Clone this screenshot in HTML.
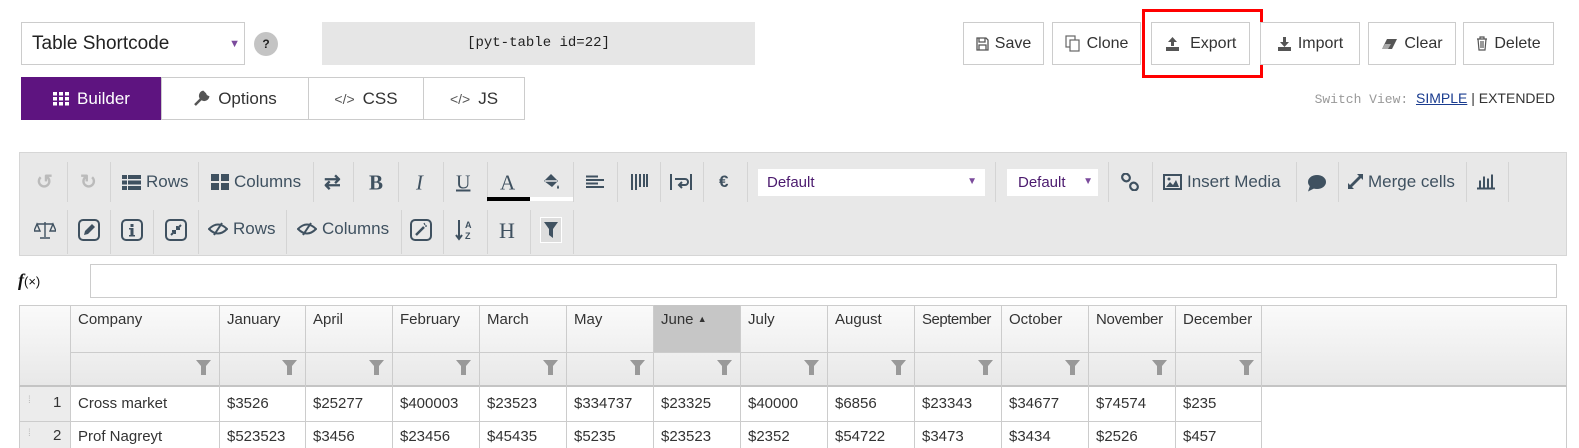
<!DOCTYPE html>
<html><head><meta charset="utf-8"><style>
*{box-sizing:border-box;margin:0;padding:0}
body{width:1579px;height:448px;overflow:hidden;background:#fff;font-family:"Liberation Sans",Arial,sans-serif;position:relative;color:#333}
.a{position:absolute}
.btn{position:absolute;top:22px;height:43px;border:1px solid #ccc;background:#fff;font-size:16px;color:#333;display:flex;align-items:center;justify-content:center;gap:6px}
.tab{position:absolute;top:77px;height:43px;border:1px solid #ccc;font-size:17px;display:flex;align-items:center;justify-content:center;gap:8px;color:#333}
.sep{position:absolute;width:1px;background:#d4d4d4}
.ti{position:absolute;color:#3f5160;font-size:17px;display:flex;align-items:center;gap:5px;transform:translateY(-50%)}
.col{position:absolute;top:305px;height:143px;border-left:1px solid #ccc}
.hd{position:absolute;font-size:15px;color:#333}
.cell{position:absolute;font-size:15px;color:#333}
.hl{position:absolute;height:1px;background:#ccc}
.fi{position:absolute;width:14px;height:14px}
</style></head><body>
<!-- select -->
<div class="a" style="left:21px;top:22px;width:224px;height:43px;border:1px solid #ccc;font-size:19px;color:#222;padding:10px 0 0 10px">Table Shortcode<span style="position:absolute;right:4px;top:15px;font-size:11px;color:#7b4b9c">▼</span></div>
<div class="a" style="left:254px;top:32px;width:24px;height:24px;border-radius:50%;background:#c4c4c4;font-size:12px;font-weight:bold;text-align:center;line-height:24px;color:#222">?</div>
<div class="a" style="left:322px;top:22px;width:433px;height:43px;background:#e6e6e6;font-family:'Liberation Mono',monospace;font-size:14px;text-align:center;line-height:43px;color:#222">[pyt-table id=22]</div>
<!-- buttons -->
<div class="btn" style="left:963px;width:81px"><svg width="13" height="14" viewBox="0 0 13 14"><path d="M1 1h9l2 2v10H1z M3 1v4h6V1 M3 8h7v5H3z" fill="none" stroke="#555" stroke-width="1.3"/></svg>Save</div>
<div class="btn" style="left:1052px;width:89px"><svg width="16" height="17" viewBox="0 0 16 17"><rect x="1" y="1" width="9" height="11" fill="none" stroke="#666" stroke-width="1.2"/><rect x="5" y="5" width="9" height="11" fill="#fff" stroke="#666" stroke-width="1.2"/></svg>Clone</div>
<div class="btn" style="left:1151px;width:99px"><svg width="15" height="14" viewBox="0 0 15 14"><path d="M7.5 0L3 5h3v4h3V5h3z M1 10h13v4H1z" fill="#555"/></svg>&nbsp;Export</div>
<div class="a" style="left:1142px;top:9px;width:121px;height:69px;border:3px solid #f00"></div>
<div class="btn" style="left:1260px;width:100px"><svg width="15" height="14" viewBox="0 0 15 14"><path d="M6 0h3v5h3L7.5 10 3 5h3z M1 10h13v4H1z" fill="#555"/></svg>Import</div>
<div class="btn" style="left:1368px;width:88px"><svg width="17" height="12" viewBox="0 0 17 12"><path d="M6 1h10L11 11H1z" fill="#555"/><path d="M1 11l3-5h6l-3 5z" fill="#fff" opacity=".5"/></svg>Clear</div>
<div class="btn" style="left:1463px;width:91px"><svg width="12" height="15" viewBox="0 0 12 15"><path d="M1 3h10 M4 3V1h4v2 M2 3l1 11h6l1-11 M5 5v7 M7 5v7" fill="none" stroke="#555" stroke-width="1.2"/></svg>Delete</div>
<!-- tabs -->
<div class="tab" style="left:21px;width:141px;background:#5e1480;border-color:#5e1480;color:#fff"><svg width="16" height="14" viewBox="0 0 16 14" fill="#fff"><rect x="0" y="0" width="4" height="3.5"/><rect x="6" y="0" width="4" height="3.5"/><rect x="12" y="0" width="4" height="3.5"/><rect x="0" y="5" width="4" height="3.5"/><rect x="6" y="5" width="4" height="3.5"/><rect x="12" y="5" width="4" height="3.5"/><rect x="0" y="10" width="4" height="3.5"/><rect x="6" y="10" width="4" height="3.5"/><rect x="12" y="10" width="4" height="3.5"/></svg>Builder</div>
<div class="tab" style="left:161px;width:148px"><svg width="17" height="17" viewBox="0 0 17 17"><path d="M2 15L9 8 M10 2a4 4 0 1 0 5 5l-2-1-1-2z" fill="#555" stroke="#555" stroke-width="2.5"/></svg>Options</div>
<div class="tab" style="left:308px;width:116px"><span style="font-size:14px;color:#555">&lt;/&gt;</span>CSS</div>
<div class="tab" style="left:423px;width:102px"><span style="font-size:14px;color:#555">&lt;/&gt;</span>JS</div>
<div class="a" style="right:24px;top:90px;font-size:14px;color:#333"><span style="font-family:'Liberation Mono',monospace;font-size:13px;color:#999">Switch View: </span><span style="color:#1a3c8f;text-decoration:underline">SIMPLE</span> | EXTENDED</div>
<!-- toolbar -->
<div class="a" style="left:19px;top:152px;width:1548px;height:104px;background:#e8e8e8;border:1px solid #d6d6d6"></div>
<div class="sep" style="left:67px;top:162px;height:40px"></div><div class="sep" style="left:110px;top:162px;height:40px"></div><div class="sep" style="left:198px;top:162px;height:40px"></div><div class="sep" style="left:313px;top:162px;height:40px"></div><div class="sep" style="left:353px;top:162px;height:40px"></div><div class="sep" style="left:398px;top:162px;height:40px"></div><div class="sep" style="left:443px;top:162px;height:40px"></div><div class="sep" style="left:487px;top:162px;height:40px"></div><div class="sep" style="left:573px;top:162px;height:40px"></div><div class="sep" style="left:617px;top:162px;height:40px"></div><div class="sep" style="left:660px;top:162px;height:40px"></div><div class="sep" style="left:703px;top:162px;height:40px"></div><div class="sep" style="left:747px;top:162px;height:40px"></div><div class="sep" style="left:995px;top:162px;height:40px"></div><div class="sep" style="left:1108px;top:162px;height:40px"></div><div class="sep" style="left:1152px;top:162px;height:40px"></div><div class="sep" style="left:1296px;top:162px;height:40px"></div><div class="sep" style="left:1338px;top:162px;height:40px"></div><div class="sep" style="left:1466px;top:162px;height:40px"></div><div class="sep" style="left:1508px;top:162px;height:40px"></div>
<div class="sep" style="left:67px;top:210px;height:44px"></div><div class="sep" style="left:110px;top:210px;height:44px"></div><div class="sep" style="left:153px;top:210px;height:44px"></div><div class="sep" style="left:198px;top:210px;height:44px"></div><div class="sep" style="left:286px;top:210px;height:44px"></div><div class="sep" style="left:401px;top:210px;height:44px"></div><div class="sep" style="left:443px;top:210px;height:44px"></div><div class="sep" style="left:487px;top:210px;height:44px"></div><div class="sep" style="left:530px;top:210px;height:44px"></div><div class="sep" style="left:573px;top:210px;height:44px"></div>
<div class="a" style="left:487px;top:197px;width:43px;height:4px;background:#000"></div>
<div class="a" style="left:530px;top:197px;width:43px;height:4px;background:#fff"></div>
<!-- row1 icons -->
<div class="ti" style="left:36px;top:182px;color:#bbb;font-size:20px;font-weight:bold">↺</div>
<div class="ti" style="left:80px;top:182px;color:#bbb;font-size:20px;font-weight:bold">↻</div>
<div class="ti" style="left:122px;top:182px"><svg width="19" height="15" viewBox="0 0 19 15" fill="#3f5160"><rect width="5" height="4"/><rect x="6" width="13" height="4"/><rect y="5.5" width="5" height="4"/><rect x="6" y="5.5" width="13" height="4"/><rect y="11" width="5" height="4"/><rect x="6" y="11" width="13" height="4"/></svg>Rows</div>
<div class="ti" style="left:211px;top:182px"><svg width="18" height="16" viewBox="0 0 18 16" fill="#3f5160"><rect width="8" height="7"/><rect x="10" width="8" height="7"/><rect y="9" width="8" height="7"/><rect x="10" y="9" width="8" height="7"/></svg>Columns</div>
<div class="ti" style="left:324px;top:182px;font-size:20px;font-weight:bold">⇄</div>
<div class="ti" style="left:369px;top:183px;font-family:'Liberation Serif',serif;font-weight:bold;font-size:21px">B</div>
<div class="ti" style="left:416px;top:183px;font-family:'Liberation Serif',serif;font-style:italic;font-size:21px">I</div>
<div class="ti" style="left:456px;top:183px;font-family:'Liberation Serif',serif;text-decoration:underline;font-size:20px">U</div>
<div class="ti" style="left:500px;top:183px;font-family:'Liberation Serif',serif;font-size:21px">A</div>
<div class="ti" style="left:541px;top:182px"><svg width="20" height="18" viewBox="0 0 20 18"><path d="M3 8l7-7 7 7-6 6z" fill="#3f5160"/><path d="M4 8h12" stroke="#e8e8e8" stroke-width="1.5"/><path d="M17 12q2 3 0 4q-2-1 0-4z" fill="#3f5160"/></svg></div>
<div class="ti" style="left:586px;top:182px"><svg width="18" height="13" viewBox="0 0 18 13" fill="#3f5160"><rect width="12" height="2"/><rect y="3.5" width="18" height="2"/><rect y="7" width="12" height="2"/><rect y="10.5" width="18" height="2"/></svg></div>
<div class="ti" style="left:631px;top:182px"><svg width="17" height="16" viewBox="0 0 17 16" fill="#3f5160"><rect width="2" height="16"/><rect x="4" width="2" height="16"/><rect x="8" width="2" height="13"/><rect x="12" width="2" height="13"/><rect x="15" width="2" height="13"/></svg></div>
<div class="ti" style="left:670px;top:182px"><svg width="22" height="16" viewBox="0 0 22 16" fill="none" stroke="#3f5160" stroke-width="2"><path d="M1 0v16 M21 0v16 M5 5h10a3 3 0 0 1 0 6H10 M12 8l-3 3 3 3"/></svg></div>
<div class="ti" style="left:719px;top:182px;font-weight:bold">€</div>
<div class="a" style="left:758px;top:169px;width:227px;height:27px;background:#fff;font-size:15px;color:#4b1a6e;padding:5px 0 0 9px">Default<span style="position:absolute;right:8px;top:7px;font-size:10px;color:#7b4b9c">▼</span></div>
<div class="a" style="left:1007px;top:169px;width:91px;height:27px;background:#fff;font-size:15px;color:#4b1a6e;padding:5px 0 0 11px">Default<span style="position:absolute;right:5px;top:7px;font-size:10px;color:#7b4b9c">▼</span></div>
<div class="ti" style="left:1121px;top:182px"><svg width="18" height="18" viewBox="0 0 18 18" fill="none" stroke="#3f5160" stroke-width="2.2"><rect x="1" y="1" width="8" height="7" rx="3.5" transform="rotate(45 5 4.5)"/><rect x="9" y="10" width="8" height="7" rx="3.5" transform="rotate(45 13 13.5)"/></svg></div>
<div class="ti" style="left:1163px;top:182px"><svg width="19" height="16" viewBox="0 0 19 16"><rect x="1" y="1" width="17" height="14" fill="none" stroke="#3f5160" stroke-width="2"/><path d="M3 13l4-5 3 3 3-5 3 7z" fill="#3f5160"/><circle cx="6" cy="5" r="1.5" fill="#3f5160"/></svg>Insert Media</div>
<div class="ti" style="left:1307px;top:183px"><svg width="19" height="17" viewBox="0 0 19 17"><ellipse cx="10" cy="7.5" rx="9" ry="7" fill="#3f5160"/><path d="M3 11l-2 6 6-3z" fill="#3f5160"/></svg></div>
<div class="ti" style="left:1347px;top:182px"><svg width="16" height="16" viewBox="0 0 16 16" fill="#3f5160"><path d="M10 0h6v6l-2-2-9 9 2 2H1v-6l2 2 9-9z"/></svg>Merge cells</div>
<div class="ti" style="left:1477px;top:182px"><svg width="18" height="15" viewBox="0 0 18 15" fill="#3f5160"><rect y="13" width="18" height="2"/><rect x="2" y="6" width="2" height="7"/><rect x="6" y="2" width="2" height="11"/><rect x="10" y="4" width="2" height="9"/><rect x="14" y="0" width="2" height="13"/></svg></div>
<!-- row2 icons -->
<div class="ti" style="left:34px;top:230px"><svg width="22" height="18" viewBox="0 0 22 18" fill="none" stroke="#3f5160" stroke-width="1.4"><path d="M11 1v15 M3 3h16 M6 17h10 M3 3L0 10h6z M19 3l-3 7h6z"/></svg></div>
<div class="ti" style="left:78px;top:230px"><svg width="22" height="22" viewBox="0 0 22 22"><rect x="1" y="1" width="20" height="20" rx="4" fill="none" stroke="#3f5160" stroke-width="2"/><path d="M6 16l1-4 7-7 3 3-7 7z" fill="#3f5160"/></svg></div>
<div class="ti" style="left:121px;top:230px"><svg width="22" height="22" viewBox="0 0 22 22"><rect x="1" y="1" width="20" height="20" rx="4" fill="none" stroke="#3f5160" stroke-width="2"/><rect x="9.5" y="5" width="3" height="3" fill="#3f5160"/><path d="M8 9h4.5v7H14v1.5H8V16h1.5v-5.5H8z" fill="#3f5160"/></svg></div>
<div class="ti" style="left:165px;top:230px"><svg width="22" height="22" viewBox="0 0 22 22"><rect x="1" y="1" width="20" height="20" rx="4" fill="none" stroke="#3f5160" stroke-width="2"/><path d="M16 6l-4 4 M12 7v3h3 M6 16l4-4 M7 12h3v3" stroke="#3f5160" stroke-width="2" fill="none"/></svg></div>
<div class="ti" style="left:208px;top:229px"><svg width="20" height="14" viewBox="0 0 20 14" fill="none" stroke="#3f5160" stroke-width="2"><path d="M1 7q9-9 18 0q-9 9-18 0z M14 1L6 13"/></svg>Rows</div>
<div class="ti" style="left:297px;top:229px"><svg width="20" height="14" viewBox="0 0 20 14" fill="none" stroke="#3f5160" stroke-width="2"><path d="M1 7q9-9 18 0q-9 9-18 0z M14 1L6 13"/></svg>Columns</div>
<div class="ti" style="left:410px;top:230px"><svg width="22" height="22" viewBox="0 0 22 22"><rect x="1" y="1" width="20" height="20" rx="4" fill="none" stroke="#3f5160" stroke-width="2"/><path d="M6 16l8-8" stroke="#3f5160" stroke-width="2.5"/><path d="M14 4l1 2 M17 7l-2 0" stroke="#3f5160" stroke-width="1.2"/></svg></div>
<div class="ti" style="left:455px;top:230px"><svg width="20" height="22" viewBox="0 0 20 22"><path d="M4 1v18 M1 16l3 4 3-4" fill="none" stroke="#3f5160" stroke-width="2"/><text x="10" y="9" font-size="9" font-family="Liberation Sans" font-weight="bold" fill="#3f5160">A</text><text x="10" y="20" font-size="9" font-family="Liberation Sans" font-weight="bold" fill="#3f5160">Z</text></svg></div>
<div class="ti" style="left:499px;top:231px;font-family:'Liberation Serif',serif;font-size:22px">H</div>
<div class="a" style="left:540px;top:217px;width:22px;height:26px;background:#ddd;border:1px solid #fff"></div>
<div class="ti" style="left:544px;top:230px"><svg width="14" height="16" viewBox="0 0 14 16"><path d="M0 0h14L9 7v9L5 13V7z" fill="#3f5160"/></svg></div>
<!-- fx -->
<div class="a" style="left:18px;top:270px;font-size:18px;font-style:italic;font-family:'Liberation Serif',serif;font-weight:bold;color:#111">f<span style="font-style:normal;font-weight:normal;font-family:'Liberation Sans';font-size:13px">(×)</span></div>
<div class="a" style="left:90px;top:264px;width:1467px;height:34px;border:1px solid #ccc"></div>
<!-- table -->
<div class="a" style="left:19px;top:305px;width:1548px;height:82px;background:linear-gradient(#fafafa,#e8e8e8);border:1px solid #ccc;border-bottom:2px solid #c4c4c4"></div>
<div class="a" style="left:19px;top:387px;width:51px;height:61px;background:#ececec"></div>
<div class="a" style="left:653px;top:305px;width:87px;height:47px;background:#c6c6c6"></div>
<div class="a" style="left:19px;top:387px;width:1px;height:61px;background:#ccc"></div>
<div class="a" style="left:1566px;top:387px;width:1px;height:61px;background:#ccc"></div>
<div class="hl" style="left:70px;top:352px;width:1191px"></div>
<div class="hl" style="left:19px;top:421px;width:1242px"></div>
<div class="col" style="left:70px"></div><div class="col" style="left:219px"></div><div class="col" style="left:305px"></div><div class="col" style="left:392px"></div><div class="col" style="left:479px"></div><div class="col" style="left:566px"></div><div class="col" style="left:653px"></div><div class="col" style="left:740px"></div><div class="col" style="left:827px"></div><div class="col" style="left:914px"></div><div class="col" style="left:1001px"></div><div class="col" style="left:1088px"></div><div class="col" style="left:1175px"></div><div class="col" style="left:1261px"></div>
<div class="hd" style="left:78px;top:311px">Company</div><div class="hd" style="left:227px;top:311px">January</div><div class="hd" style="left:313px;top:311px">April</div><div class="hd" style="left:400px;top:311px">February</div><div class="hd" style="left:487px;top:311px">March</div><div class="hd" style="left:574px;top:311px">May</div><div class="hd" style="left:661px;top:311px">June <span style="font-size:9px;vertical-align:2px">▲</span></div><div class="hd" style="left:748px;top:311px">July</div><div class="hd" style="left:835px;top:311px">August</div><div class="hd" style="left:922px;top:311px;letter-spacing:-0.5px">September</div><div class="hd" style="left:1009px;top:311px">October</div><div class="hd" style="left:1096px;top:311px;letter-spacing:-0.3px">November</div><div class="hd" style="left:1183px;top:311px">December</div>
<svg class="a" style="left:0;top:360px" width="1300" height="16" viewBox="0 0 1300 16" fill="#999">
<path id="f" d="M196 0h15l-5 6v9h-5V6z"/>
<use href="#f" x="86"/><use href="#f" x="173"/><use href="#f" x="260"/><use href="#f" x="347"/><use href="#f" x="434"/><use href="#f" x="521"/><use href="#f" x="608"/><use href="#f" x="695"/><use href="#f" x="782"/><use href="#f" x="869"/><use href="#f" x="956"/><use href="#f" x="1043"/></svg>
<div class="cell" style="left:28px;top:395px;color:#bbb;font-size:10px">⁞</div><div class="cell" style="left:53px;top:394px">1</div>
<div class="cell" style="left:28px;top:428px;color:#bbb;font-size:10px">⁞</div><div class="cell" style="left:53px;top:427px">2</div>
<div class="cell" style="left:78px;top:395px">Cross market</div><div class="cell" style="left:227px;top:395px">$3526</div><div class="cell" style="left:313px;top:395px">$25277</div><div class="cell" style="left:400px;top:395px">$400003</div><div class="cell" style="left:487px;top:395px">$23523</div><div class="cell" style="left:574px;top:395px">$334737</div><div class="cell" style="left:661px;top:395px">$23325</div><div class="cell" style="left:748px;top:395px">$40000</div><div class="cell" style="left:835px;top:395px">$6856</div><div class="cell" style="left:922px;top:395px">$23343</div><div class="cell" style="left:1009px;top:395px">$34677</div><div class="cell" style="left:1096px;top:395px">$74574</div><div class="cell" style="left:1183px;top:395px">$235</div>
<div class="cell" style="left:78px;top:428px">Prof Nagreyt</div><div class="cell" style="left:227px;top:428px">$523523</div><div class="cell" style="left:313px;top:428px">$3456</div><div class="cell" style="left:400px;top:428px">$23456</div><div class="cell" style="left:487px;top:428px">$45435</div><div class="cell" style="left:574px;top:428px">$5235</div><div class="cell" style="left:661px;top:428px">$23523</div><div class="cell" style="left:748px;top:428px">$2352</div><div class="cell" style="left:835px;top:428px">$54722</div><div class="cell" style="left:922px;top:428px">$3473</div><div class="cell" style="left:1009px;top:428px">$3434</div><div class="cell" style="left:1096px;top:428px">$2526</div><div class="cell" style="left:1183px;top:428px">$457</div>
</body></html>
